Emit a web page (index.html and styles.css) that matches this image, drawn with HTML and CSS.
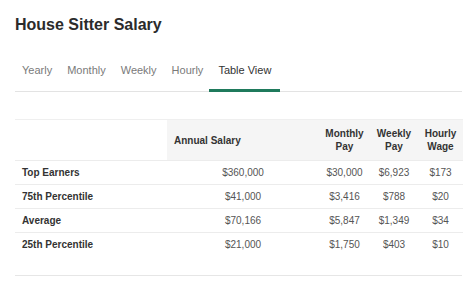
FILE: index.html
```html
<!DOCTYPE html>
<html>
<head>
<meta charset="utf-8">
<link rel="stylesheet" href="styles.css">
</head>
<body>
<div class="wrap">
  <h1 class="title">House Sitter Salary</h1>
  <nav class="tabs">
    <span class="tab">Yearly</span>
    <span class="tab">Monthly</span>
    <span class="tab">Weekly</span>
    <span class="tab">Hourly</span>
    <span class="tab active">Table View</span>
  </nav>
  <table class="salary">
    <thead>
      <tr>
        <th class="c-label"></th>
        <th class="c-annual">Annual Salary</th>
        <th class="c-month">Monthly<br>Pay</th>
        <th class="c-week">Weekly<br>Pay</th>
        <th class="c-hour">Hourly<br>Wage</th>
      </tr>
    </thead>
    <tbody>
      <tr><td class="c-label">Top Earners</td><td class="c-annual">$360,000</td><td>$30,000</td><td>$6,923</td><td>$173</td></tr>
      <tr><td class="c-label">75th Percentile</td><td class="c-annual">$41,000</td><td>$3,416</td><td>$788</td><td>$20</td></tr>
      <tr><td class="c-label">Average</td><td class="c-annual">$70,166</td><td>$5,847</td><td>$1,349</td><td>$34</td></tr>
      <tr><td class="c-label">25th Percentile</td><td class="c-annual">$21,000</td><td>$1,750</td><td>$403</td><td>$10</td></tr>
    </tbody>
  </table>
  <div class="divider"></div>
</div>
</body>
</html>
```

FILE: styles.css
```css
html, body {
  margin: 0;
  padding: 0;
  background: #fff;
}
body {
  font-family: "Liberation Sans", Arial, sans-serif;
  color: #333;
}
.wrap {
  width: 448px;
  padding: 15px 0 0 15px;
}
.title {
  margin: 0 0 17px 0;
  font-size: 16px;
  line-height: 20px;
  font-weight: bold;
  color: #2b2b2b;
}
.tabs {
  display: flex;
  gap: 1px;
  border-bottom: 1px solid #e3e3e3;
  width: 447px;
}
.tab {
  font-size: 11px;
  line-height: 13px;
  padding: 12px 7px;
  color: #7a7a7a;
  border-bottom: 3px solid transparent;
  margin-bottom: -1px;
}
.tab.active {
  color: #333;
  padding: 12px 9px;
  margin-left: -2px;
  border-bottom-color: #1f7a5c;
}
.salary {
  margin-top: 27px;
  width: 448px;
  border-collapse: collapse;
  border-top: 1px solid #efefef;
  font-size: 10px;
  table-layout: fixed;
}
.salary th {
  height: 40px;
  padding: 0;
  font-weight: bold;
  color: #333;
  line-height: 13px;
  text-align: center;
  background: #f5f5f5;
  vertical-align: middle;
}
.salary th.c-label {
  background: #fff;
  width: 152px;
}
.salary th.c-annual {
  text-align: left;
  padding-left: 7px;
  width: 145px;
}
.salary th.c-month { width: 51px; }
.salary th.c-week { width: 48px; }
.salary th.c-hour { width: 45px; }
.salary td {
  height: 23px;
  padding: 0;
  border-top: 1px solid #ececec;
  text-align: center;
  color: #555;
  vertical-align: middle;
}
.salary td.c-label {
  text-align: left;
  padding-left: 7px;
  font-weight: bold;
  color: #333;
}
.divider {
  margin-top: 19px;
  width: 447px;
  height: 1px;
  background: #e6e6e6;
}
```
